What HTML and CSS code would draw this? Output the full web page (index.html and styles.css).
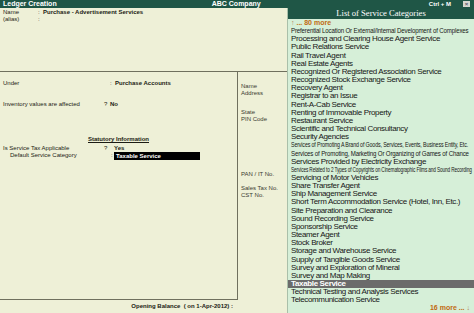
FILE: index.html
```html
<!DOCTYPE html>
<html>
<head>
<meta charset="utf-8">
<link rel="stylesheet" href="styles.css">
</head>
<body>
<div class="titlebar">
  <span class="tb-title">Ledger Creation</span>
  <span class="tb-company">ABC Company</span>
  <span class="tb-key">Ctrl + M</span>
  <span class="tb-close">×</span>
</div>
<div class="main">
  <div class="left">
    <div class="top">
      <div class="row"><span class="tlbl">Name</span><span class="tcolon">:</span><span class="bold">Purchase - Advertisement Services</span></div>
      <div class="row"><span class="tlbl">(alias)</span><span class="tcolon">:</span></div>
    </div>
    <div class="middle">
      <div class="mcol">
        <div class="row r-under"><span class="lbl">Under</span><span class="mk mk-c">:</span><span class="bold">Purchase Accounts</span></div>
        <div class="row r-inv"><span class="lbl">Inventory values are affected</span><span class="mk mk-q">?</span><span class="bold">No</span></div>
        <div class="stat">Statutory Information</div>
        <div class="row"><span class="lbl">Is Service Tax Applicable</span><span class="mk mk-q">?</span><span class="bold yes">Yes</span></div>
        <div class="row"><span class="lbl lbl-in">Default Service Category</span><span class="mk mk-c2">:</span><span class="sel">Taxable Service</span></div>
      </div>
      <div class="rcol">
        <div class="g g1">Name<br>Address</div>
        <div class="g g2">State<br>PIN Code</div>
        <div class="g g3">PAN / IT No.</div>
        <div class="g g4">Sales Tax No.<br>CST No.</div>
      </div>
    </div>
    <div class="footer"><span class="ob">Opening Balance&nbsp; ( on 1-Apr-2012) :</span></div>
  </div>
  <div class="list">
    <div class="lhead">List of Service Categories</div>
    <ul class="items">
      <li class="more"><span class="arr">↑</span> ... 80 more</li>
      <li><span class="fit f1">Preferential Location Or External/Internal Development of Complexes</span></li>
      <li>Processing and Clearing House Agent Service</li>
      <li>Public Relations Service</li>
      <li>Rail Travel Agent</li>
      <li>Real Estate Agents</li>
      <li>Recognized Or Registered Association Service</li>
      <li>Recognized Stock Exchange Service</li>
      <li>Recovery Agent</li>
      <li>Registrar to an Issue</li>
      <li>Rent-A-Cab Service</li>
      <li>Renting of Immovable Property</li>
      <li>Restaurant Service</li>
      <li>Scientific and Technical Consultancy</li>
      <li>Security Agencies</li>
      <li><span class="fit f2">Services of Promoting A Brand of Goods, Services, Events, Business Entity, Etc.</span></li>
      <li><span class="fit f3">Services of Promoting, Marketing Or Organizing of Games of Chance</span></li>
      <li>Services Provided by Electricity Exchange</li>
      <li><span class="fit f4">Services Related to 2 Types of Copyrights on Cinematographic Films and Sound Recording</span></li>
      <li>Servicing of Motor Vehicles</li>
      <li>Share Transfer Agent</li>
      <li>Ship Management Service</li>
      <li>Short Term Accommodation Service (Hotel, Inn, Etc.)</li>
      <li>Site Preparation and Clearance</li>
      <li>Sound Recording Service</li>
      <li>Sponsorship Service</li>
      <li>Steamer Agent</li>
      <li>Stock Broker</li>
      <li>Storage and Warehouse Service</li>
      <li>Supply of Tangible Goods Service</li>
      <li>Survey and Exploration of Mineral</li>
      <li>Survey and Map Making</li>
      <li class="current">Taxable Service</li>
      <li>Technical Testing and Analysis Services</li>
      <li>Telecommunication Service</li>
      <li class="more more-end">16 more ... <span class="arr">↓</span></li>
    </ul>
  </div>
</div>
</body>
</html>
```
FILE: styles.css
```css
* { box-sizing: border-box; }
html, body {
  margin: 0;
  padding: 0;
}
body {
  width: 474px;
  height: 313px;
  overflow: hidden;
  background: #eef0d7;
  font-family: "Liberation Sans", Arial, sans-serif;
  color: #1c1c14;
}
.titlebar {
  height: 8px;
  background: #1f5646;
  color: #ffffff;
  font-weight: bold;
  font-size: 7px;
  line-height: 8px;
  display: flex;
  align-items: center;
}
.tb-title { margin-left: 3px; }
.tb-company { margin-left: 155px; }
.tb-key { margin-left: auto; font-size: 6px; margin-right: 12px; }
.tb-close {
  width: 7px;
  height: 6px;
  background: #d6d8d0;
  color: #556;
  font-size: 6px;
  line-height: 6px;
  text-align: center;
  margin-right: 4px;
}
.main {
  display: flex;
  height: 305px;
}
.left {
  flex: none;
  width: 287px;
  display: flex;
  flex-direction: column;
  font-size: 6px;
  line-height: 7px;
}
.top {
  height: 64px;
  border-bottom: 1px solid #6f705e;
  padding-top: 1px;
}
.row {
  display: flex;
  white-space: nowrap;
}
.bold { font-weight: bold; }
.tlbl { width: 38px; padding-left: 3px; }
.tcolon { width: 5px; }
.middle {
  display: flex;
  height: 228px;
}
.mcol {
  flex: none;
  width: 238px;
  border-right: 1px solid #6f705e;
  border-bottom: 1px solid #6f705e;
  padding-top: 8px;
}
.lbl { width: 104px; padding-left: 3px; }
.lbl-in { padding-left: 10px; }
.mk { display: inline-block; }
.mk-c { margin-left: 6px; width: 5px; }
.mk-q { width: 6px; }
.mk-c2 { margin-left: 7px; width: 3px; }
.yes { margin-left: 4px; }
.r-inv { margin-top: 14px; }
.stat {
  margin-top: 28px;
  margin-left: 88px;
  font-weight: bold;
  text-decoration: underline;
  height: 9px;
}
.sel {
  background: #000000;
  color: #ffffff;
  font-weight: bold;
  width: 86px;
  height: 8px;
  line-height: 8px;
  padding-left: 2px;
}
.rcol {
  flex: 1;
  padding-left: 3px;
  color: #3a3a30;
  white-space: nowrap;
}
.g1 { margin-top: 11px; }
.g2 { margin-top: 12px; }
.g3 { margin-top: 48px; }
.g4 { margin-top: 7px; }
.footer {
  flex: 1;
  width: 238px;
  display: flex;
  align-items: center;
  justify-content: flex-end;
  padding-right: 5px;
}
.ob { font-weight: bold; }
.list {
  flex: 1;
  min-width: 0;
  overflow: hidden;
  background: #d6efd8;
  border-left: 1px solid #a9bfa9;
  display: flex;
  flex-direction: column;
}
.lhead {
  flex: none;
  height: 11px;
  background: #1f5646;
  color: #ffffff;
  font-family: "Liberation Serif", "Times New Roman", serif;
  font-size: 8.6px;
  line-height: 11px;
  text-align: center;
}
.items {
  list-style: none;
  margin: 0;
  padding: 0;
  font-size: 8px;
  line-height: 8.17px;
  letter-spacing: -0.35px;
  color: #161616;
}
.items li {
  padding-left: 3px;
  white-space: nowrap;
  height: 8.17px;
}
.fit {
  display: inline-block;
  transform-origin: left center;
  letter-spacing: -0.2px;
}
.f1 { transform: scaleX(0.765); }
.f2 { transform: scaleX(0.66); }
.f3 { transform: scaleX(0.765); }
.f4 { transform: scaleX(0.59); }
.more {
  color: #c06a10;
  font-weight: bold;
  letter-spacing: 0;
  font-size: 7px;
}
.more .arr { font-weight: normal; color: #b08050; }
.more-end {
  text-align: right;
  padding-right: 4px;
}
.current {
  background: #6b6b6b;
  color: #ffffff;
  font-weight: bold;
}
```
